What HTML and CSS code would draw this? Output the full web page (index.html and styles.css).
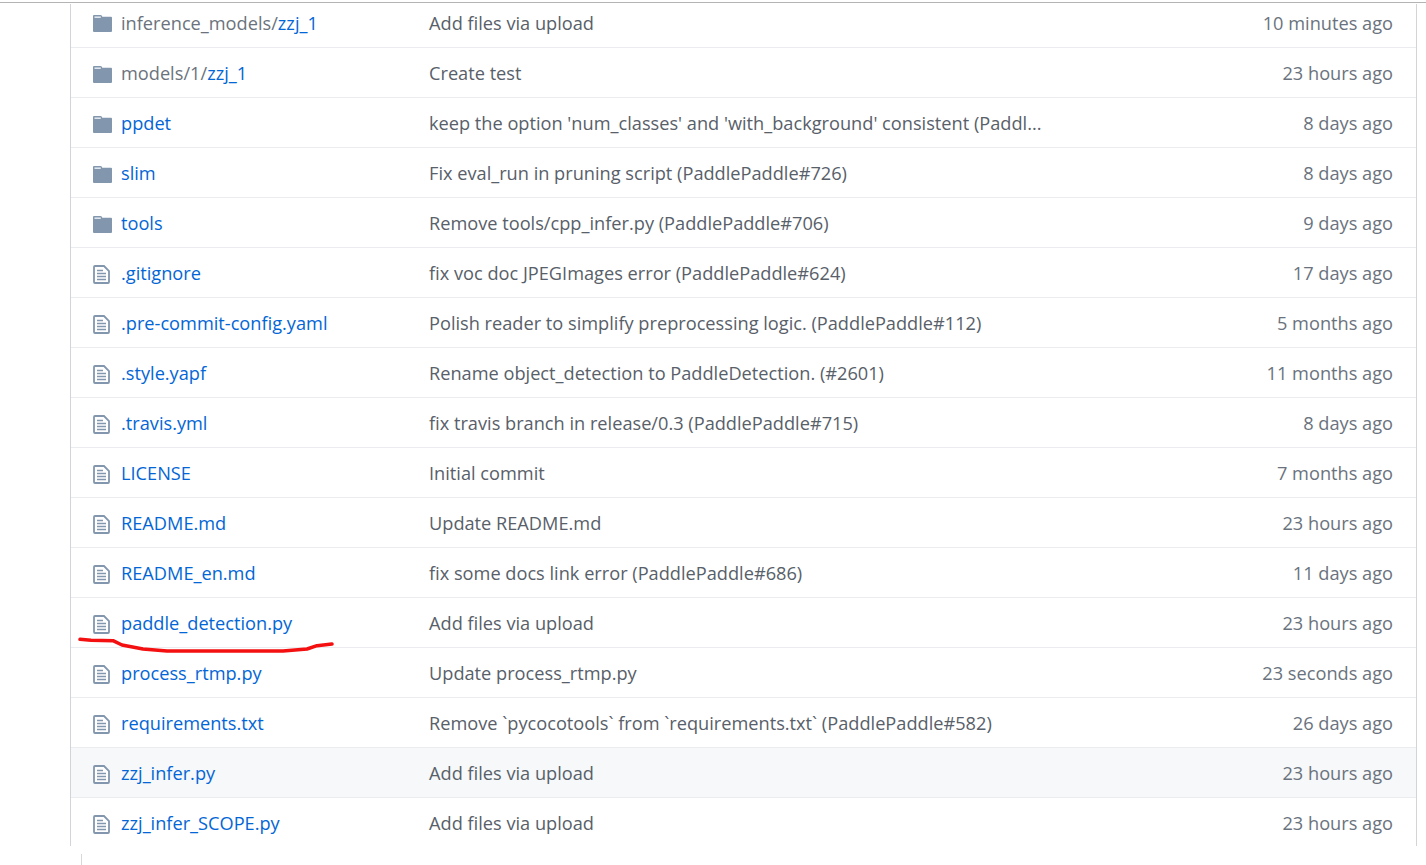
FILE: index.html
```html
<!DOCTYPE html>
<html lang="en">
<head>
  <meta charset="UTF-8" />
  <title>PaddleDetection files</title>
  <link rel="stylesheet" href="styles.css">
</head>
<body>
  <svg width="0" height="0" class="sprites">
    <symbol id="folder" viewBox="0 0 19 17">
      <path d="M1 0H7.500Q9 0 9.300 1.800H18Q19 1.800 19 2.800V16Q19 17 18 17H1Q0 17 0 16V1Q0 0 1 0Z" fill="#8296ae"/>
      <path d="M1.500 1.400H7.800V3H1.500Z" fill="#dfe5ec"/>
    </symbol>
    <symbol id="file" viewBox="0 0 17 19">
      <path d="M2 1H11L16 6V17Q16 18 15 18H2Q1 18 1 17V2Q1 1 2 1Z" fill="#fff" stroke="#8296ae" stroke-width="1.800"/>
      <path d="M4 5.500H10M4 8.500H13M4 11.500H13M4 14.500H13" stroke="#8296ae" stroke-width="1.500"/>
    </symbol>
  </svg>

  <div class="top-line"></div>

  <div class="file-list">
    <div class="row first">
      <svg class="icon-folder"><use href="#folder"/></svg>
      <div class="name"><span class="dim">inference_models/</span><a href="#">zzj_1</a></div>
      <div class="message">Add files via upload</div>
      <div class="age">10 minutes ago</div>
    </div>
    <div class="row">
      <svg class="icon-folder"><use href="#folder"/></svg>
      <div class="name"><span class="dim">models/1/</span><a href="#">zzj_1</a></div>
      <div class="message">Create test</div>
      <div class="age">23 hours ago</div>
    </div>
    <div class="row">
      <svg class="icon-folder"><use href="#folder"/></svg>
      <div class="name"><a href="#">ppdet</a></div>
      <div class="message">keep the option 'num_classes' and 'with_background' consistent (Paddl...</div>
      <div class="age">8 days ago</div>
    </div>
    <div class="row">
      <svg class="icon-folder"><use href="#folder"/></svg>
      <div class="name"><a href="#">slim</a></div>
      <div class="message">Fix eval_run in pruning script (PaddlePaddle#726)</div>
      <div class="age">8 days ago</div>
    </div>
    <div class="row">
      <svg class="icon-folder"><use href="#folder"/></svg>
      <div class="name"><a href="#">tools</a></div>
      <div class="message">Remove tools/cpp_infer.py (PaddlePaddle#706)</div>
      <div class="age">9 days ago</div>
    </div>
    <div class="row">
      <svg class="icon-file"><use href="#file"/></svg>
      <div class="name"><a href="#">.gitignore</a></div>
      <div class="message">fix voc doc JPEGImages error (PaddlePaddle#624)</div>
      <div class="age">17 days ago</div>
    </div>
    <div class="row">
      <svg class="icon-file"><use href="#file"/></svg>
      <div class="name"><a href="#">.pre-commit-config.yaml</a></div>
      <div class="message">Polish reader to simplify preprocessing logic. (PaddlePaddle#112)</div>
      <div class="age">5 months ago</div>
    </div>
    <div class="row">
      <svg class="icon-file"><use href="#file"/></svg>
      <div class="name"><a href="#">.style.yapf</a></div>
      <div class="message">Rename object_detection to PaddleDetection. (#2601)</div>
      <div class="age">11 months ago</div>
    </div>
    <div class="row">
      <svg class="icon-file"><use href="#file"/></svg>
      <div class="name"><a href="#">.travis.yml</a></div>
      <div class="message">fix travis branch in release/0.3 (PaddlePaddle#715)</div>
      <div class="age">8 days ago</div>
    </div>
    <div class="row">
      <svg class="icon-file"><use href="#file"/></svg>
      <div class="name"><a href="#">LICENSE</a></div>
      <div class="message">Initial commit</div>
      <div class="age">7 months ago</div>
    </div>
    <div class="row">
      <svg class="icon-file"><use href="#file"/></svg>
      <div class="name"><a href="#">README.md</a></div>
      <div class="message">Update README.md</div>
      <div class="age">23 hours ago</div>
    </div>
    <div class="row">
      <svg class="icon-file"><use href="#file"/></svg>
      <div class="name"><a href="#">README_en.md</a></div>
      <div class="message">fix some docs link error (PaddlePaddle#686)</div>
      <div class="age">11 days ago</div>
    </div>
    <div class="row">
      <svg class="icon-file"><use href="#file"/></svg>
      <div class="name"><a href="#">paddle_detection.py</a></div>
      <div class="message">Add files via upload</div>
      <div class="age">23 hours ago</div>
    </div>
    <div class="row">
      <svg class="icon-file"><use href="#file"/></svg>
      <div class="name"><a href="#">process_rtmp.py</a></div>
      <div class="message">Update process_rtmp.py</div>
      <div class="age">23 seconds ago</div>
    </div>
    <div class="row">
      <svg class="icon-file"><use href="#file"/></svg>
      <div class="name"><a href="#">requirements.txt</a></div>
      <div class="message">Remove `pycocotools` from `requirements.txt` (PaddlePaddle#582)</div>
      <div class="age">26 days ago</div>
    </div>
    <div class="row hovered">
      <svg class="icon-file"><use href="#file"/></svg>
      <div class="name"><a href="#">zzj_infer.py</a></div>
      <div class="message">Add files via upload</div>
      <div class="age">23 hours ago</div>
    </div>
    <div class="row last">
      <svg class="icon-file"><use href="#file"/></svg>
      <div class="name"><a href="#">zzj_infer_SCOPE.py</a></div>
      <div class="message">Add files via upload</div>
      <div class="age">23 hours ago</div>
    </div>
  </div>

  <div class="stub"></div>

  <!-- red pen mark over the screenshot -->
  <svg class="pen-mark" width="258" height="22" viewBox="0 0 258 22">
    <path d="M3 5.300L14 6.200 36 6.700 45 11 66 15 90 17 206 17 230 15 240 11.700 255 10" fill="none" stroke="#f41010" stroke-width="3.500" stroke-linecap="round" stroke-linejoin="round"/>
  </svg>
</body>
</html>
```

FILE: styles.css
```css
html, body {
  height: 100%;
  overflow: hidden;
}

body {
  margin: 0;
  padding-top: 2px;
  box-sizing: border-box;
  background: #fff;
  position: relative;
  font-family: "Open Sans", Arial, sans-serif;
  font-size: 18.2px;
  color: #586069;
}

a {
  color: #0366d6;
  text-decoration: none;
}

.sprites {
  position: absolute;
}

.top-line {
  height: 1px;
  background: #b4b4b4;
}

.file-list {
  margin: 1px 9px 0 70px;
  border-left: 1px solid #d1d5da;
  border-right: 1px solid #d1d5da;
}

.row {
  display: flex;
  align-items: center;
  height: 49px;
  padding-left: 22px;
  border-bottom: 1px solid #eaecef;
}

.row.first {
  height: 37px;
  padding-bottom: 6px;
}

.row.last {
  border-bottom: 0;
  height: 46px;
  padding-top: 2px;
}

.row.hovered {
  background: #f6f8fa;
}

.icon-folder {
  width: 19px;
  height: 17px;
  margin: 3px 9px 0 0;
  flex: none;
}

.first .icon-folder {
  margin-top: 2px;
}

.icon-file {
  width: 17px;
  height: 19px;
  margin: 3px 11px 0 0;
  flex: none;
}

.name {
  width: 308px;
  flex: none;
  white-space: nowrap;
}

.dim {
  color: #6a737d;
}

.message {
  flex: 1;
  white-space: nowrap;
}

.age {
  color: #6a737d;
  padding-right: 23px;
  white-space: nowrap;
}

.stub {
  width: 1px;
  height: 11px;
  margin: 8px 0 0 81px;
  background: #d8d8d8;
}

.pen-mark {
  position: absolute;
  left: 77px;
  top: 634px;
}
```
